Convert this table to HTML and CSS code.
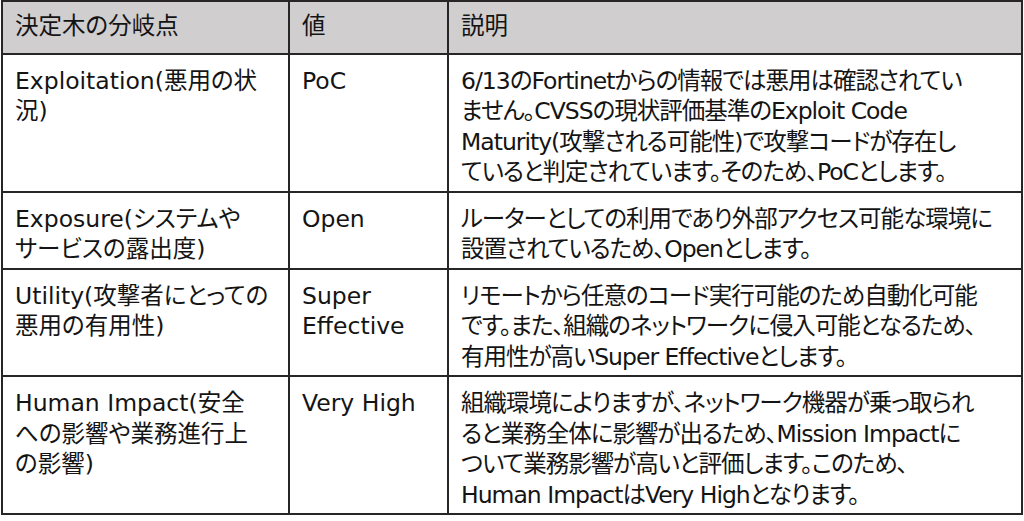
FILE: index.html
```html
<!DOCTYPE html>
<html lang="ja">
<head>
<meta charset="utf-8">
<title>決定木の分岐点</title>
<link rel="stylesheet" href="styles.css">
</head>
<body>
<table class="ssvc">
  <colgroup>
    <col class="c-point">
    <col class="c-value">
    <col class="c-desc">
  </colgroup>
  <thead>
    <tr>
      <th>決定木の分岐点</th>
      <th>値</th>
      <th>説明</th>
    </tr>
  </thead>
  <tbody>
    <tr>
      <td>Exploitation(悪用の状<br>況)</td>
      <td>PoC</td>
      <td class="desc">6/13のFortinetからの情報では悪用は確認されてい<br>ません。CVSSの現状評価基準のExploit Code<br>Maturity(攻撃される可能性)で攻撃コードが存在し<br>ていると判定されています。そのため、PoCとします。</td>
    </tr>
    <tr>
      <td>Exposure(システムや<br>サービスの露出度)</td>
      <td>Open</td>
      <td class="desc">ルーターとしての利用であり外部アクセス可能な環境に<br>設置されているため、Openとします。</td>
    </tr>
    <tr>
      <td>Utility(攻撃者にとっての<br>悪用の有用性)</td>
      <td>Super<br>Effective</td>
      <td class="desc">リモートから任意のコード実行可能のため自動化可能<br>です。また、組織のネットワークに侵入可能となるため、<br>有用性が高いSuper Effectiveとします。</td>
    </tr>
    <tr>
      <td>Human Impact(安全<br>への影響や業務進行上<br>の影響)</td>
      <td>Very High</td>
      <td class="desc">組織環境によりますが、ネットワーク機器が乗っ取られ<br>ると業務全体に影響が出るため、Mission Impactに<br>ついて業務影響が高いと評価します。このため、<br>Human ImpactはVery Highとなります。</td>
    </tr>
  </tbody>
</table>
</body>
</html>
```

FILE: styles.css
```css
html, body {
  margin: 0;
  padding: 0;
  background: #ffffff;
}

body {
  font-family: "DejaVu Sans", "Noto Sans CJK JP", sans-serif;
  font-size: 23.5px;
  line-height: 30.5px;
  color: #141414;
  font-feature-settings: "palt";
}

.ssvc {
  margin: 0 0 0 1px;
  width: 1020px;
  table-layout: fixed;
  border-collapse: collapse;
  border: 2px solid #262626;
}

.c-point { width: 287px; }
.c-value { width: 159px; }
.c-desc { width: 574px; }

.ssvc th,
.ssvc td {
  border: 2px solid #262626;
  text-align: left;
  vertical-align: top;
  white-space: nowrap;
  font-weight: normal;
  padding: 11px 6px 3px 12px;
}

.ssvc th {
  background: #d0cece;
  padding-top: 9px;
  padding-bottom: 11px;
}

.ssvc .desc {
  letter-spacing: -1px;
}
```
